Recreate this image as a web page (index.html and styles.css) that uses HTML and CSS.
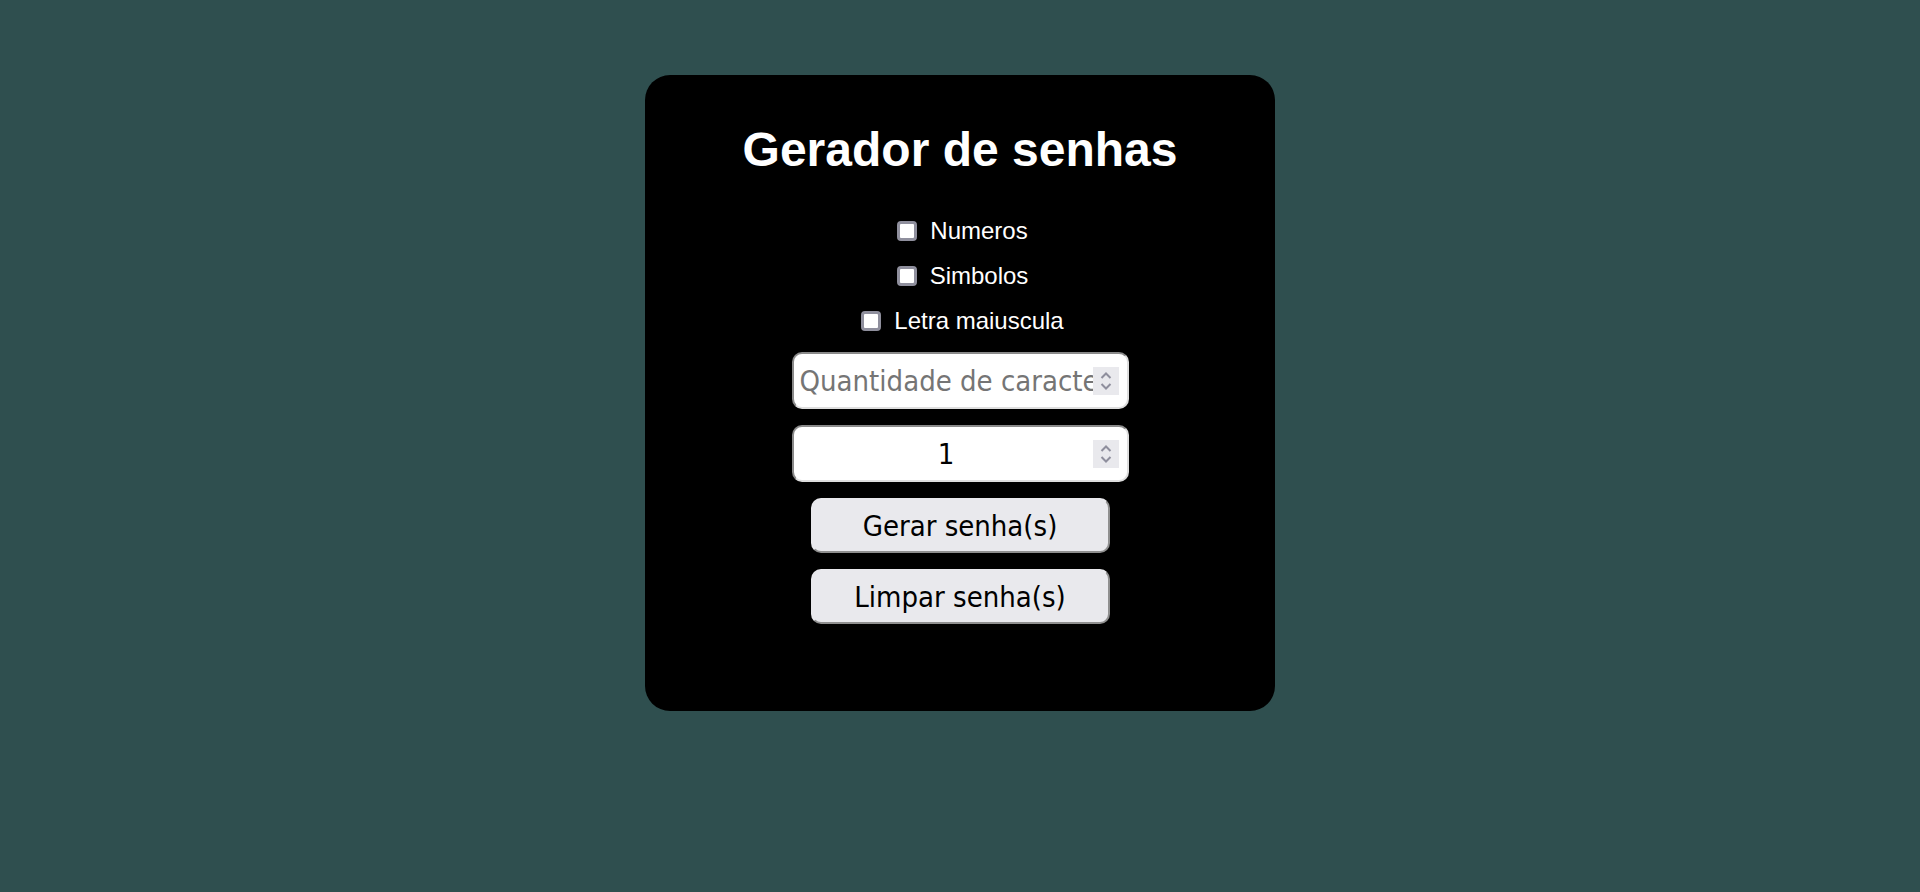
FILE: index.html
```html
<!DOCTYPE html>
<html lang="pt-BR">
<head>
  <meta charset="UTF-8">
  <meta name="viewport" content="width=device-width, initial-scale=1.0">
  <title>Gerador de senhas</title>
  <link rel="stylesheet" href="styles.css">
</head>
<body>
  <div class="gerador">
    <h1>Gerador de senhas</h1>
    <div class="opcoes">
      <label class="opcao"><input type="checkbox" id="numeros">Numeros</label>
      <label class="opcao"><input type="checkbox" id="simbolos">Simbolos</label>
      <label class="opcao"><input type="checkbox" id="maiusculas">Letra maiuscula</label>
    </div>
    <div class="campos">
      <div class="campo">
        <input type="number" id="tamanho" min="1" placeholder="Quantidade de caracteres">
        <span class="spin" data-alvo="tamanho">
          <svg width="26" height="28" viewBox="0 0 26 28"><path d="M8.5 11l4.5-4.5 4.5 4.5M8.5 17l4.5 4.5 4.5-4.5"/></svg>
        </span>
      </div>
      <div class="campo">
        <input type="number" id="quantidade" min="1" value="1">
        <span class="spin" data-alvo="quantidade">
          <svg width="26" height="28" viewBox="0 0 26 28"><path d="M8.5 11l4.5-4.5 4.5 4.5M8.5 17l4.5 4.5 4.5-4.5"/></svg>
        </span>
      </div>
      <button class="btn" onclick="gerar()">Gerar senha(s)</button>
      <button class="btn" onclick="limpar()">Limpar senha(s)</button>
    </div>
    <div id="senhas"></div>
  </div>

  <script>
    const letras = 'abcdefghijklmnopqrstuvwxyz';
    const numeros = '0123456789';
    const simbolos = '!@#$%&*()-_=+?';

    // metade de cima sobe, metade de baixo desce
    document.querySelectorAll('.spin').forEach(spin => {
      spin.addEventListener('mousedown', e => {
        e.preventDefault();
        const campo = document.getElementById(spin.dataset.alvo);
        const r = spin.getBoundingClientRect();
        if (e.clientY < r.top + r.height / 2) campo.stepUp();
        else campo.stepDown();
      });
    });

    function gerar() {
      let chars = letras;
      if (document.getElementById('numeros').checked) chars += numeros;
      if (document.getElementById('simbolos').checked) chars += simbolos;
      if (document.getElementById('maiusculas').checked) chars += letras.toUpperCase();

      const tamanho = Number(document.getElementById('tamanho').value) || 8;
      const quantidade = Number(document.getElementById('quantidade').value) || 1;
      const lista = document.getElementById('senhas');
      lista.innerHTML = '';

      for (let i = 0; i < quantidade; i++) {
        let senha = '';
        for (let j = 0; j < tamanho; j++) {
          senha += chars[Math.floor(Math.random() * chars.length)];
        }
        const p = document.createElement('p');
        p.textContent = senha;
        lista.appendChild(p);
      }
    }

    function limpar() {
      document.getElementById('senhas').innerHTML = '';
    }
  </script>
</body>
</html>
```

FILE: styles.css
```css
body {
  margin: 0;
  background-color: darkslategray;
  font-family: "Liberation Sans", Arial, sans-serif;
}
.gerador {
  box-sizing: border-box;
  width: 630px;
  min-height: 636px;
  margin: 75px auto 0;
  padding: 47px 0 40px;
  background: black;
  border-radius: 25px;
  display: flex;
  flex-direction: column;
  align-items: center;
}
h1 {
  margin: 0 0 40px;
  font-size: 48px;
  font-weight: bold;
  color: white;
}
.opcoes {
  display: flex;
  flex-direction: column;
  gap: 17px;
}
.opcao {
  display: flex;
  align-items: center;
  justify-content: center;
  font-size: 24px;
  line-height: 28px;
  color: white;
}
.opcao input {
  appearance: none;
  box-sizing: border-box;
  width: 20px;
  height: 20px;
  margin: 0 13px 0 5px;
  background: white;
  border: 3px solid #8f8f9d;
  border-radius: 4px;
}
.campos {
  margin-top: 17px;
  display: flex;
  flex-direction: column;
  align-items: center;
  gap: 16px;
}
.campo {
  box-sizing: border-box;
  width: 337px;
  height: 57px;
  padding: 0 8px 0 6px;
  display: flex;
  align-items: center;
  background: white;
  border: 2px solid;
  border-color: #8a8a8a #dedede #dedede #8a8a8a;
  border-radius: 10px;
}
.campo input {
  flex: 1;
  min-width: 0;
  height: 100%;
  padding: 0;
  border: none;
  outline: none;
  background: transparent;
  font-family: "DejaVu Sans Condensed", "DejaVu Sans", sans-serif;
  font-size: 29px;
  color: black;
  text-align: center;
  -moz-appearance: textfield;
}
.campo input::placeholder {
  color: #757575;
}
.campo input::-webkit-inner-spin-button,
.campo input::-webkit-outer-spin-button {
  -webkit-appearance: none;
  margin: 0;
}
.spin {
  display: flex;
  width: 26px;
  height: 28px;
  background: #e9e9ed;
  cursor: default;
}
.spin path {
  fill: none;
  stroke: #8f8f9d;
  stroke-width: 2;
}
.btn {
  box-sizing: border-box;
  width: 299px;
  height: 55px;
  font-family: "DejaVu Sans Condensed", "DejaVu Sans", sans-serif;
  font-size: 29px;
  color: black;
  background: #e9e9ed;
  border: 2px solid;
  border-color: #e9e9ed #8f8f8f #8f8f8f #e9e9ed;
  border-radius: 10px;
  cursor: pointer;
}
```
